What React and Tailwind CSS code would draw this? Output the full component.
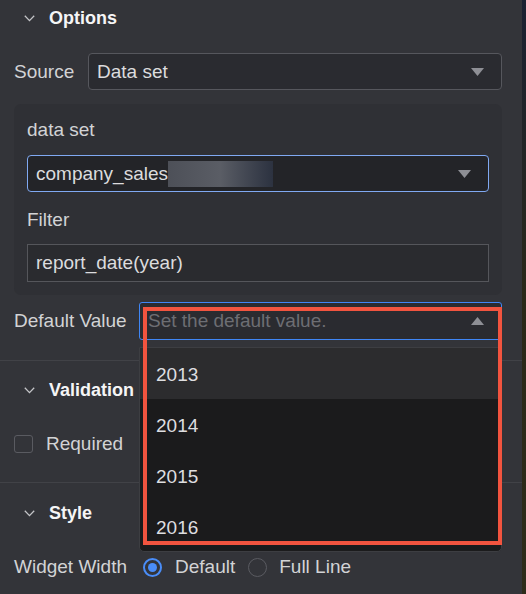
import React from "react";

const font = { fontFamily: '"Liberation Sans", Arial, sans-serif' };

function Chevron() {
  return (
    <svg width="11" height="7" viewBox="0 0 11 7" className="shrink-0">
      <polyline points="0.8,0.8 5.5,5.6 10.2,0.8" fill="none" stroke="#c4c5c8" strokeWidth="1.3" />
    </svg>
  );
}

function CaretDown() {
  return (
    <svg width="13" height="8" viewBox="0 0 13 8" className="shrink-0">
      <polygon points="0,0 13,0 6.5,8" fill="#8e8f95" />
    </svg>
  );
}

function CaretUp() {
  return (
    <svg width="13" height="8" viewBox="0 0 13 8" className="shrink-0">
      <polygon points="0,8 13,8 6.5,0" fill="#8e8f95" />
    </svg>
  );
}

function Header({ title, h }) {
  return (
    <div className={`flex items-center pl-[24px] gap-[14px] ${h}`}>
      <Chevron />
      <span className="pt-[1px] text-[18px] font-bold text-[#f5f5f6]">{title}</span>
    </div>
  );
}

export default function App() {
  return (
    <div className="w-[526px] h-[594px] flex overflow-hidden" style={font}>
      <div className="relative w-[522px] h-full bg-[#333439] flex flex-col">
        <div className="h-[36px] flex items-center pl-[24px] gap-[14px]">
          <Chevron />
          <span className="pt-[1px] text-[18px] font-bold text-[#f5f5f6]">Options</span>
        </div>

        <div className="mt-[17px] flex items-center pl-[14px] pr-[20px]">
          <span className="w-[74px] pt-[1px] text-[19px] text-[#d2d3d5]">Source</span>
          <div className="flex-1 h-[37px] flex items-center justify-between pl-[8px] pr-[17px] rounded-[4px] border border-[#56575d] bg-[#2a2b30]">
            <span className="pt-[1px] text-[19px] text-[#dcdcde]">Data set</span>
            <CaretDown />
          </div>
        </div>

        <div className="mt-[14px] ml-[14px] mr-[20px] rounded-[7px] bg-[#2f3035] p-[13px] flex flex-col">
          <div className="h-[26px] flex items-center text-[19px] text-[#d2d3d5]">data set</div>
          <div className="mt-[12px] h-[37px] flex items-center justify-between pl-[8px] pr-[17px] rounded-[4px] border border-[#80a9f2] bg-[#232428]">
            <div className="flex items-center">
              <span className="pt-[1px] text-[19px] text-[#dcdcde]">company_sales</span>
              <div className="w-[105px] h-[26px] bg-gradient-to-r from-[#4d5058] via-[#5a5d65] to-[#2c3240]" />
            </div>
            <CaretDown />
          </div>
          <div className="mt-[15px] h-[26px] flex items-center text-[19px] text-[#d2d3d5]">Filter</div>
          <div className="mt-[11px] h-[38px] flex items-center pl-[8px] border border-[#55565b] bg-[#2a2b2f]">
            <span className="pt-[1px] text-[19px] text-[#dcdcde]">report_date(year)</span>
          </div>
        </div>

        <div className="mt-[7px] flex items-center pl-[14px] pr-[20px]">
          <span className="w-[125px] pt-[1px] text-[19px] text-[#d2d3d5] whitespace-nowrap">Default Value</span>
          <div className="flex-1 h-[38px] flex items-center justify-between pl-[8px] pr-[17px] rounded-[3px] border border-[#3f86f5] bg-[#2a2b30]">
            <span className="pt-[1px] text-[19px] text-[#6d6e73]">Set the default value.</span>
            <CaretUp />
          </div>
        </div>

        <div className="mt-[20px] border-t border-[#414247]">
          <Header title="Validation" h="h-[58px]" />
          <div className="h-[50px] flex items-center pl-[14px] gap-[13px]">
            <div className="w-[19px] h-[18px] rounded-[3px] border border-[#5a5b61]" />
            <span className="pt-[1px] text-[19px] text-[#d2d3d5]">Required</span>
          </div>
          <div className="h-[13px]" />
        </div>

        <div className="border-t border-[#414247]">
          <Header title="Style" h="h-[60px]" />
          <div className="h-[48px] flex items-center pl-[14px]">
            <span className="w-[129px] pt-[1px] text-[19px] text-[#d2d3d5] whitespace-nowrap">Widget Width</span>
            <div className="w-[19px] h-[19px] rounded-full border-2 border-[#4a8df8] flex items-center justify-center">
              <div className="w-[9px] h-[9px] rounded-full bg-[#4a8df8]" />
            </div>
            <span className="ml-[13px] pt-[1px] text-[19px] text-[#d2d3d5]">Default</span>
            <div className="ml-[13px] w-[19px] h-[19px] rounded-full border border-[#5a5b61]" />
            <span className="ml-[12px] pt-[1px] text-[19px] text-[#d2d3d5]">Full Line</span>
          </div>
        </div>

        <div className="absolute left-[139px] top-[347px] w-[363px] h-[205px] overflow-hidden rounded-b-[5px] border border-[#3d3e42] bg-[#1b1b1c]">
          {["2013", "2014", "2015", "2016"].map((y, i) => (
            <div
              key={y}
              className={`h-[51px] shrink-0 flex items-center pl-[16px] pt-[3px] text-[19px] text-[#dedee0] ${i === 0 ? "bg-[#2c2c2e]" : ""}`}
            >
              {y}
            </div>
          ))}
        </div>

        <div className="absolute left-[143px] top-[307px] w-[359px] h-[238px] border-[4px] border-[#f2543f] pointer-events-none" />
      </div>
      <div className="w-[4px] h-full bg-gradient-to-b from-[#1b2132] via-[#2a2818] to-[#2e2c1a]" />
    </div>
  );
}
